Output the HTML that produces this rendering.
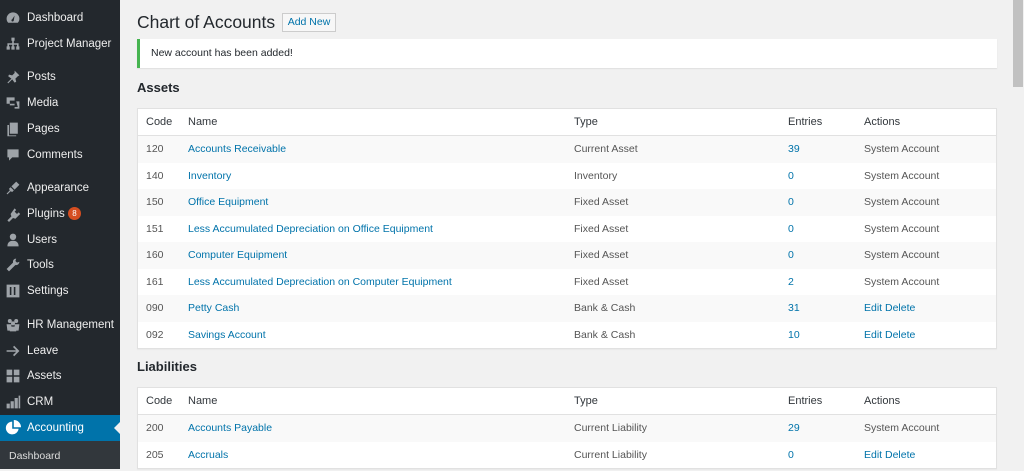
<!DOCTYPE html>
<html><head><style>
*{margin:0;padding:0;box-sizing:border-box}
body{width:1024px;height:469px;overflow:hidden;background:#f1f1f1;font-family:"Liberation Sans",sans-serif;position:relative;color:#555}
#side{position:absolute;left:0;top:0;width:120px;height:469px;background:#23282d}
.mi{position:absolute;left:0;width:120px;height:26px;color:#eee;font-size:11.5px;line-height:26px;padding-left:27px}
.ic{position:absolute;left:5px;top:5px;width:16px;height:16px;fill:#9ea3a8}
.act{background:#0073aa;color:#fff}
.act .ic{fill:#fff}
#sub{position:absolute;left:0;top:441px;width:120px;height:28px;background:#32373c;color:#ddd;font-size:10.5px;line-height:30px;padding-left:9px}
.arrow{position:absolute;right:0;top:7px;width:0;height:0;border-top:6px solid transparent;border-bottom:6px solid transparent;border-right:6px solid #f1f1f1}
h1{position:absolute;left:137px;top:12px;font-size:17.5px;font-weight:normal;color:#23282d}
.btn{position:absolute;left:282px;top:13px;width:54px;height:19px;border:1px solid #ccc;background:#f7f7f7;color:#0073aa;font-size:10.5px;line-height:17px;text-align:center}
.notice{position:absolute;left:137px;top:39px;width:860px;height:29px;background:#fff;border-left:3px solid #46b450;box-shadow:0 1px 1px rgba(0,0,0,.08);font-size:10.5px;line-height:29px;padding-left:11px;color:#23282d}
h2{position:absolute;left:137px;font-size:13px;font-weight:bold;color:#23282d}
.tbl{position:absolute;left:137px;width:860px;background:#fff;border:1px solid #e1e1e1;box-shadow:0 1px 1px rgba(0,0,0,.04)}
.r{position:relative;height:26.5px;font-size:10.5px;line-height:26.5px}
.r span{position:absolute;top:0}
.hd{border-bottom:1px solid #e1e1e1;font-size:11px;color:#32373c;height:27px}
.alt{background:#f9f9f9}
.c1{left:8px}.c2{left:50px}.c3{left:436px}.c4{left:650px}.c5{left:726px}
a{color:#0073aa;text-decoration:none}
#sb{position:absolute;left:1012px;top:0;width:12px;height:469px;background:#f1f1f1}
#th{position:absolute;left:1013px;top:0;width:10px;height:87px;background:#c1c1c1}
</style></head><body>
<div id="side">
<div class="mi" style="top:5px"><svg class="ic" viewBox="0 0 20 20"><path d="M10 3a8 8 0 0 0-8 8c0 2 .7 3.7 2 5h12c1.3-1.3 2-3 2-5a8 8 0 0 0-8-8zm1 10a1.5 1.5 0 1 1-2-1.5L12 7z"/></svg>Dashboard</div>
<div class="mi" style="top:31px"><svg class="ic" viewBox="0 0 20 20"><path d="M8 2h4v4h-1v3h6v4h1v4h-4v-4h1v-2h-4v2h1v4H8v-4h1v-2H5v2h1v4H2v-4h1V9h6V6H8z"/></svg>Project Manager</div>
<div class="mi" style="top:64px"><svg class="ic" viewBox="0 0 20 20"><path d="M12 2l6 6-2 1-3 3 1 4-2 1-3-4-5 5-1-1 5-5-4-3 1-2 4 1 3-3z"/></svg>Posts</div>
<div class="mi" style="top:90px"><svg class="ic" viewBox="0 0 20 20"><path d="M2 3h10v8H2zm4 4v6h6V7zm8 1h4v9h-6v-2h4z"/></svg>Media</div>
<div class="mi" style="top:116px"><svg class="ic" viewBox="0 0 20 20"><path d="M6 2h10v14H6zM3 5h2v13h9v1H3z"/></svg>Pages</div>
<div class="mi" style="top:142px"><svg class="ic" viewBox="0 0 20 20"><path d="M3 3h14v10H9l-4 4v-4H3z"/></svg>Comments</div>
<div class="mi" style="top:175px"><svg class="ic" viewBox="0 0 20 20"><path d="M14 2l4 4-6 6-4-4zM7 9l4 4-2 2-2-1-4 4-1-1 4-4-1-2z"/></svg>Appearance</div>
<div class="mi" style="top:201px"><svg class="ic" viewBox="0 0 20 20"><path d="M12 3l2 2-2 2 3 3 2-2 2 2-6 6-3-1-5 5-2-2 5-5-1-3z"/></svg>Plugins <span style="display:inline-block;width:13px;height:13px;border-radius:7px;background:#d54e21;color:#fff;font-size:8px;line-height:13px;text-align:center;vertical-align:1px">8</span></div>
<div class="mi" style="top:227px"><svg class="ic" viewBox="0 0 20 20"><circle cx="10" cy="6" r="4"/><path d="M3 18c0-5 3-7 7-7s7 2 7 7z"/></svg>Users</div>
<div class="mi" style="top:252px"><svg class="ic" viewBox="0 0 20 20"><path d="M14 2a4 4 0 0 0-4 5L2 15l3 3 8-8a4 4 0 0 0 5-4l-3 1-2-2 1-3z"/></svg>Tools</div>
<div class="mi" style="top:278px"><svg class="ic" viewBox="0 0 20 20"><path d="M2 2h16v16H2zm4 3v10h2V5zm5 0v10h2V5z"/></svg>Settings</div>
<div class="mi" style="top:312px"><svg class="ic" viewBox="0 0 20 20"><circle cx="6" cy="5" r="2.5"/><circle cx="14" cy="5" r="2.5"/><circle cx="10" cy="8" r="2.5"/><path d="M2 9h6v8H3zm10 0h6l-1 8h-5zM6 12h8v6H6z"/></svg>HR Management</div>
<div class="mi" style="top:338px"><svg class="ic" viewBox="0 0 20 20"><path d="M2 9h12l-4-4 1.5-1.5L18 10l-6.5 6.5L10 15l4-4H2z"/></svg>Leave</div>
<div class="mi" style="top:363px"><svg class="ic" viewBox="0 0 20 20"><path d="M2 2h7v7H2zm9 0h7v7h-7zM2 11h7v7H2zm9 0h7v7h-7z"/></svg>Assets</div>
<div class="mi" style="top:389px"><svg class="ic" viewBox="0 0 20 20"><path d="M2 12h4v6H2zm5-3h4v9H7zm5-4h4v13h-4zm5-3h2v16h-2z"/></svg>CRM</div>
<div class="mi act" style="top:415px"><svg class="ic" viewBox="0 0 20 20"><path d="M9 2a8 8 0 1 0 8 9H9z M11 0v9h9a9 9 0 0 0-9-9z"/></svg>Accounting<div class="arrow"></div></div>
<div id="sub">Dashboard</div>
</div>

<h1>Chart of Accounts</h1>
<div class="btn">Add New</div>
<div class="notice">New account has been added!</div>
<h2 style="top:80px">Assets</h2>
<div class="tbl" style="top:108px">
<div class="r hd"><span class="c1">Code</span><span class="c2">Name</span><span class="c3">Type</span><span class="c4">Entries</span><span class="c5">Actions</span></div>
<div class="r alt"><span class="c1">120</span><span class="c2"><a>Accounts Receivable</a></span><span class="c3">Current Asset</span><span class="c4"><a>39</a></span><span class="c5">System Account</span></div>
<div class="r"><span class="c1">140</span><span class="c2"><a>Inventory</a></span><span class="c3">Inventory</span><span class="c4"><a>0</a></span><span class="c5">System Account</span></div>
<div class="r alt"><span class="c1">150</span><span class="c2"><a>Office Equipment</a></span><span class="c3">Fixed Asset</span><span class="c4"><a>0</a></span><span class="c5">System Account</span></div>
<div class="r"><span class="c1">151</span><span class="c2"><a>Less Accumulated Depreciation on Office Equipment</a></span><span class="c3">Fixed Asset</span><span class="c4"><a>0</a></span><span class="c5">System Account</span></div>
<div class="r alt"><span class="c1">160</span><span class="c2"><a>Computer Equipment</a></span><span class="c3">Fixed Asset</span><span class="c4"><a>0</a></span><span class="c5">System Account</span></div>
<div class="r"><span class="c1">161</span><span class="c2"><a>Less Accumulated Depreciation on Computer Equipment</a></span><span class="c3">Fixed Asset</span><span class="c4"><a>2</a></span><span class="c5">System Account</span></div>
<div class="r alt"><span class="c1">090</span><span class="c2"><a>Petty Cash</a></span><span class="c3">Bank &amp; Cash</span><span class="c4"><a>31</a></span><span class="c5"><a>Edit Delete</a></span></div>
<div class="r"><span class="c1">092</span><span class="c2"><a>Savings Account</a></span><span class="c3">Bank &amp; Cash</span><span class="c4"><a>10</a></span><span class="c5"><a>Edit Delete</a></span></div>
</div>
<h2 style="top:359px">Liabilities</h2>
<div class="tbl" style="top:387px">
<div class="r hd"><span class="c1">Code</span><span class="c2">Name</span><span class="c3">Type</span><span class="c4">Entries</span><span class="c5">Actions</span></div>
<div class="r alt"><span class="c1">200</span><span class="c2"><a>Accounts Payable</a></span><span class="c3">Current Liability</span><span class="c4"><a>29</a></span><span class="c5">System Account</span></div>
<div class="r"><span class="c1">205</span><span class="c2"><a>Accruals</a></span><span class="c3">Current Liability</span><span class="c4"><a>0</a></span><span class="c5"><a>Edit Delete</a></span></div>
</div>
<div id="sb"></div><div id="th"></div>
</body></html>
